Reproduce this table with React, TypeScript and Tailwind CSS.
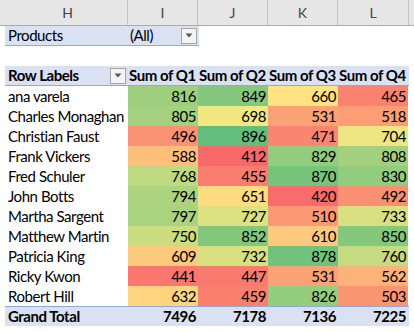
import React from "react";

type Row = { name: string; q: number[] };

const rows: Row[] = [
  { name: "ana varela", q: [816, 849, 660, 465] },
  { name: "Charles Monaghan", q: [805, 698, 531, 518] },
  { name: "Christian Faust", q: [496, 896, 471, 704] },
  { name: "Frank Vickers", q: [588, 412, 829, 808] },
  { name: "Fred Schuler", q: [768, 455, 870, 830] },
  { name: "John Botts", q: [794, 651, 420, 492] },
  { name: "Martha Sargent", q: [797, 727, 510, 733] },
  { name: "Matthew Martin", q: [750, 852, 610, 850] },
  { name: "Patricia King", q: [609, 732, 878, 760] },
  { name: "Ricky Kwon", q: [441, 447, 531, 562] },
  { name: "Robert Hill", q: [632, 459, 826, 503] },
];

const all = rows.flatMap((r) => r.q).sort((a, b) => a - b);
const lo = all[0];
const hi = all[all.length - 1];
// 50th percentile, same as Excel's default midpoint
const pos = 0.5 * (all.length - 1);
const mid = all[Math.floor(pos)] + (all[Math.ceil(pos)] - all[Math.floor(pos)]) * (pos - Math.floor(pos));

const RED = [248, 105, 107];
const YELLOW = [255, 235, 132];
const GREEN = [99, 190, 123];

function mix(a: number[], b: number[], t: number) {
  const c = a.map((x, i) => Math.round(x + (b[i] - x) * t));
  return `rgb(${c[0]}, ${c[1]}, ${c[2]})`;
}

function scaleColor(v: number) {
  if (v <= mid) return mix(RED, YELLOW, (v - lo) / (mid - lo));
  return mix(YELLOW, GREEN, (v - mid) / (hi - mid));
}

const totals = [0, 1, 2, 3].map((i) => rows.reduce((s, r) => s + r.q[i], 0));

function DropButton() {
  return (
    <div className="w-[16px] h-[16px] border border-[#a6a6a6] bg-[#f4f4f4] flex items-center justify-center">
      <svg width="8" height="5" viewBox="0 0 8 5">
        <path d="M0.5 0.5 L7.5 0.5 L4 4.5 Z" fill="#595959" />
      </svg>
    </div>
  );
}

export default function App() {
  return (
    <div
      className="w-[414px] h-[332px] bg-white overflow-hidden text-[#000] text-[15px] tracking-[-0.45px]"
      style={{ fontFamily: "Lato, 'Liberation Sans', sans-serif" }}
    >
      {/* column letters */}
      <div className="flex h-[26px] bg-[#e6e6e6] border-b border-[#ababab] text-[#444] text-[14px] tracking-normal">
        <div className="w-[128px] border-r border-[#c4c4c4] flex items-center justify-center pl-[8px]">H</div>
        <div className="w-[70px] border-r border-[#c4c4c4] flex items-center justify-center">I</div>
        <div className="w-[70px] border-r border-[#c4c4c4] flex items-center justify-center">J</div>
        <div className="w-[70px] border-r border-[#c4c4c4] flex items-center justify-center">K</div>
        <div className="w-[71px] border-r border-[#c4c4c4] flex items-center justify-center">L</div>
        <div className="flex-1" />
      </div>

      {/* report filter */}
      <div className="pl-[5px]">
        <div className="flex w-[194px] h-[20px] bg-[#d9e1f2] border-b border-[#8ea9db] items-center">
          <div className="w-[123px] pl-[3px] leading-none">Products</div>
          <div className="w-[53px] pl-[2px] leading-none">(All)</div>
          <DropButton />
        </div>
      </div>

      <div className="h-[20px]" />

      {/* pivot header */}
      <div className="pl-[5px]">
        <div className="flex h-[20px] w-[404px] bg-[#d9e1f2] border-b border-[#8ea9db] items-center font-bold">
          <div className="w-[123px] flex items-center justify-between pl-[3px] pr-[2px]">
            <span className="leading-none">Row Labels</span>
            <DropButton />
          </div>
          {["Sum of Q1", "Sum of Q2", "Sum of Q3", "Sum of Q4"].map((h) => (
            <div key={h} className="w-[70px] whitespace-nowrap leading-none pl-[1px]">
              {h}
            </div>
          ))}
        </div>

        {rows.map((r) => (
          <div key={r.name} className="flex h-[20px] w-[404px]">
            <div className="w-[123px] pl-[3px] flex items-center leading-none">{r.name}</div>
            {r.q.map((v, i) => (
              <div
                key={i}
                className="w-[70px] flex items-center justify-end pr-[2px] leading-none"
                style={{ backgroundColor: scaleColor(v) }}
              >
                {v}
              </div>
            ))}
          </div>
        ))}

        <div className="flex h-[20px] w-[404px] bg-[#d9e1f2] border-t border-[#8ea9db] font-bold">
          <div className="w-[123px] pl-[3px] flex items-center leading-none">Grand Total</div>
          {totals.map((t, i) => (
            <div key={i} className="w-[70px] flex items-center justify-end pr-[2px] leading-none">
              {t}
            </div>
          ))}
        </div>
      </div>
    </div>
  );
}
